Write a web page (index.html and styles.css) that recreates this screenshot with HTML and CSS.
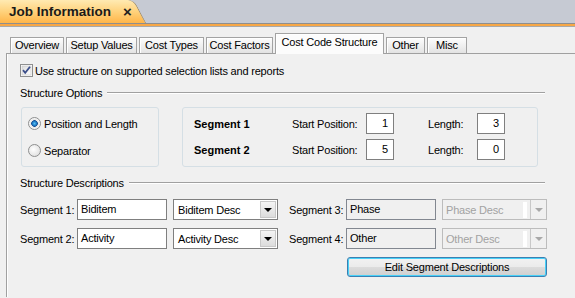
FILE: index.html
```html
<!DOCTYPE html>
<html lang="en">
  <head>
    <meta charset="UTF-8" />
    <title>Job Information</title>
    <link rel="stylesheet" href="styles.css">
  </head>
  <body>
    <div class="header">
      <div class="doc-tab">
        <span class="doc-title">Job Information</span>
        <span class="doc-close">&times;</span>
      </div>
    </div>
    <div class="header-rule"></div>

    <div class="content">
      <div class="tabs">
        <div class="tab" style="width: 54px">Overview</div>
        <div class="tab" style="width: 71px">Setup Values</div>
        <div class="tab" style="width: 65px">Cost Types</div>
        <div class="tab" style="width: 67px">Cost Factors</div>
        <div class="tab active" style="width: 109px">Cost Code Structure</div>
        <div class="tab" style="width: 39px">Other</div>
        <div class="tab" style="width: 40px">Misc</div>
      </div>

      <div class="panel">
        <label class="check-row">
          <svg class="checkbox" width="13" height="13" viewBox="0 0 13 13">
            <defs>
              <linearGradient id="cbg" x1="0" y1="0" x2="1" y2="1">
                <stop offset="0" stop-color="#dcdcdc" />
                <stop offset="1" stop-color="#ffffff" />
              </linearGradient>
            </defs>
            <rect x="0.5" y="0.5" width="12" height="12" fill="#fff" stroke="#8e8f8f" />
            <rect x="2" y="2" width="9" height="9" fill="url(#cbg)" stroke="#c2c2c2" stroke-width="0.6" />
            <path d="M3 6.2 L5.2 8.8 L10 2.8" fill="none" stroke="#3c4f8a" stroke-width="1.8" />
          </svg>
          <span>Use structure on supported selection lists and reports</span>
        </label>

        <div class="section">
          <span>Structure Options</span>
          <div class="rule"></div>
        </div>

        <div class="groups">
          <div class="group radios">
            <div class="radio-row">
              <span class="radio checked"></span>
              <span>Position and Length</span>
            </div>
            <div class="radio-row">
              <span class="radio"></span>
              <span>Separator</span>
            </div>
          </div>

          <div class="group segments">
            <b>Segment 1</b>
            <span>Start Position:</span>
            <div class="num">1</div>
            <span class="len">Length:</span>
            <div class="num">3</div>

            <b>Segment 2</b>
            <span>Start Position:</span>
            <div class="num">5</div>
            <span class="len">Length:</span>
            <div class="num">0</div>
          </div>
        </div>

        <div class="section desc-section">
          <span>Structure Descriptions</span>
          <div class="rule"></div>
        </div>

        <div class="desc-row">
          <span class="desc-label">Segment 1:</span>
          <div class="field">Biditem</div>
          <div class="combo">
            <span class="combo-text">Biditem Desc</span>
            <span class="combo-btn"><i class="arrow"></i></span>
          </div>
          <span class="desc-label second">Segment 3:</span>
          <div class="field readonly">Phase</div>
          <div class="combo disabled">
            <span class="combo-text">Phase Desc</span>
            <span class="combo-strip"></span>
            <span class="combo-btn"><i class="arrow"></i></span>
          </div>
        </div>

        <div class="desc-row">
          <span class="desc-label">Segment 2:</span>
          <div class="field">Activity</div>
          <div class="combo">
            <span class="combo-text">Activity Desc</span>
            <span class="combo-btn"><i class="arrow"></i></span>
          </div>
          <span class="desc-label second">Segment 4:</span>
          <div class="field readonly">Other</div>
          <div class="combo disabled">
            <span class="combo-text">Other Desc</span>
            <span class="combo-strip"></span>
            <span class="combo-btn"><i class="arrow"></i></span>
          </div>
        </div>

        <div class="button-row">
          <button class="edit-btn">Edit Segment Descriptions</button>
        </div>
      </div>
    </div>
  </body>
</html>
```

FILE: styles.css
```css
body {
  margin: 0;
  width: 575px;
  height: 298px;
  overflow: hidden;
  background: #f0f0f0;
  font-family: "Liberation Sans", Arial, sans-serif;
  font-size: 11px;
  letter-spacing: -0.2px;
  color: #000;
}

.header {
  height: 23px;
  background: #c6cad3;
  display: flex;
}

.doc-tab {
  position: relative;
  box-sizing: border-box;
  width: 122px;
  height: 23px;
  padding-left: 9px;
  display: flex;
  align-items: center;
  white-space: nowrap;
  background: linear-gradient(#ffeab2, #ffd27c 50%, #ffb549);
}

.doc-tab::after {
  content: "";
  position: absolute;
  top: 0;
  left: 108px;
  width: 25px;
  height: 23px;
  background: linear-gradient(#ffeab2, #ffd27c 50%, #ffb549);
  border-right: 1px solid #a08a62;
  border-top-right-radius: 6px;
  transform: skewX(28deg);
  transform-origin: top left;
}

.doc-title {
  font-size: 13.5px;
  font-weight: bold;
  letter-spacing: 0;
  color: #1a1a1a;
  position: relative;
  z-index: 1;
}

.doc-close {
  position: relative;
  z-index: 1;
  margin-left: 12px;
  font-size: 15px;
  font-weight: bold;
  letter-spacing: 0;
  color: #222;
}

.header-rule {
  height: 2px;
  background: #f7a746;
  border-top: 1px solid #8e8e8e;
  border-bottom: 1px solid #a9a9a9;
}

.content {
  padding-top: 6px;
}

.tabs {
  display: flex;
  align-items: flex-end;
  gap: 2px;
  padding-left: 10px;
  height: 20px;
}

.tab {
  box-sizing: border-box;
  height: 16px;
  border: 1px solid #a3a3a3;
  border-bottom: none;
  background: linear-gradient(#fdfdfd, #e3e3e3);
  box-shadow: inset 1px 1px 0 #ffffff;
  text-align: center;
  line-height: 15px;
  white-space: nowrap;
}

.tab.active {
  height: 21px;
  margin-bottom: -1px;
  background: #fcfcfc;
  line-height: 17px;
  position: relative;
  z-index: 1;
}

.panel {
  box-sizing: border-box;
  margin-left: 6px;
  height: 244px;
  border-top: 1px solid #a0a0a0;
  border-left: 1px solid #a0a0a0;
  box-shadow: inset 1px 0 0 #ffffff;
  padding: 10px 0 0 13px;
}

.check-row {
  display: flex;
  align-items: center;
  gap: 2px;
  height: 13px;
}

.checkbox {
  display: block;
}

.section {
  display: flex;
  align-items: center;
  gap: 5px;
  width: 525px;
  height: 13px;
  margin-top: 9px;
}

.rule {
  flex: 1;
  border-top: 1px solid #a0a0a0;
  border-bottom: 1px solid #ffffff;
}

.groups {
  display: flex;
  gap: 23px;
  margin-top: 8px;
  margin-left: 1px;
}

.group {
  box-sizing: border-box;
  height: 60px;
  border: 1px solid #d5dfe5;
  border-radius: 3px;
}

.radios {
  width: 138px;
  padding: 9px 0 0 6px;
  display: flex;
  flex-direction: column;
  gap: 14px;
}

.radio-row {
  display: flex;
  align-items: center;
  gap: 3px;
  height: 13px;
}

.radio {
  box-sizing: border-box;
  width: 13px;
  height: 13px;
  border-radius: 50%;
  border: 1px solid #8e8f8f;
  background: radial-gradient(circle at 40% 40%, #ffffff, #d8d8d8);
}

.radio.checked {
  background: radial-gradient(circle at 50% 50%, #59c0f5 0, #1f7fc8 2px, #174f96 3px, #e6e6e6 3.6px, #fafafa 5.5px);
}

.segments {
  width: 356px;
  padding: 5px 0 0 11px;
  display: grid;
  grid-template-columns: 98px 74px 28px 34px 49px 28px;
  grid-template-rows: 21px 21px;
  row-gap: 5px;
  align-items: center;
}

.segments b {
  letter-spacing: 0;
}

.len {
  grid-column: 5;
}

.num {
  box-sizing: border-box;
  height: 21px;
  border: 1px solid #7f7f7f;
  background: #fff;
  text-align: right;
  padding-right: 5px;
  line-height: 18px;
}

.desc-section {
  margin-top: 9px;
}

.desc-row {
  display: flex;
  align-items: center;
  height: 21px;
  margin-top: 10px;
}

.desc-row + .desc-row {
  margin-top: 8px;
}

.desc-label {
  width: 57px;
}

.desc-label.second {
  margin-left: 11px;
}

.field {
  box-sizing: border-box;
  width: 90px;
  height: 21px;
  border: 1px solid #7f7f7f;
  background: #fff;
  padding-left: 3px;
  line-height: 18px;
}

.field.readonly {
  background: #f0f0f0;
  border-color: #828790;
}

.combo {
  box-sizing: border-box;
  display: flex;
  width: 105px;
  height: 21px;
  margin-left: 6px;
  border: 1px solid #7f7f7f;
  background: #fff;
  padding: 1px;
}

.combo-text {
  flex: 1;
  padding-left: 3px;
  line-height: 18px;
}

.combo-btn {
  box-sizing: border-box;
  width: 16px;
  display: flex;
  align-items: center;
  justify-content: center;
  border: 1px solid #c8c8c8;
  background: linear-gradient(#f4f4f4, #dcdcdc);
}

.arrow {
  width: 0;
  height: 0;
  border-left: 4px solid transparent;
  border-right: 4px solid transparent;
  border-top: 4px solid #000;
}

.combo.disabled {
  border-color: #bcbcbc;
  background: #f0f0f0;
  color: #a2a2a2;
  padding: 0;
}

.combo.disabled .combo-text {
  line-height: 20px;
}

.combo-strip {
  width: 4px;
  margin: 2px 3px 1px 0;
  background: #fff;
}

.combo.disabled .combo-btn {
  border: none;
  border-left: 1px solid #c8c8c8;
  background: #f0f0f0;
}

.combo.disabled .arrow {
  border-top-color: #a8a8a8;
}

.button-row {
  margin-top: 8px;
  padding-left: 327px;
}

.edit-btn {
  box-sizing: border-box;
  width: 200px;
  height: 20px;
  border: 1px solid #3c7fb1;
  border-radius: 3px;
  box-shadow: inset 0 0 0 1px #48d1f8;
  background: linear-gradient(#f2f2f2, #ebebeb 50%, #dcdcdc 51%, #cfcfcf);
  font-family: "Liberation Sans", Arial, sans-serif;
  font-size: 11px;
  letter-spacing: -0.2px;
  color: #000;
  padding: 0;
  margin: 0;
}
```
